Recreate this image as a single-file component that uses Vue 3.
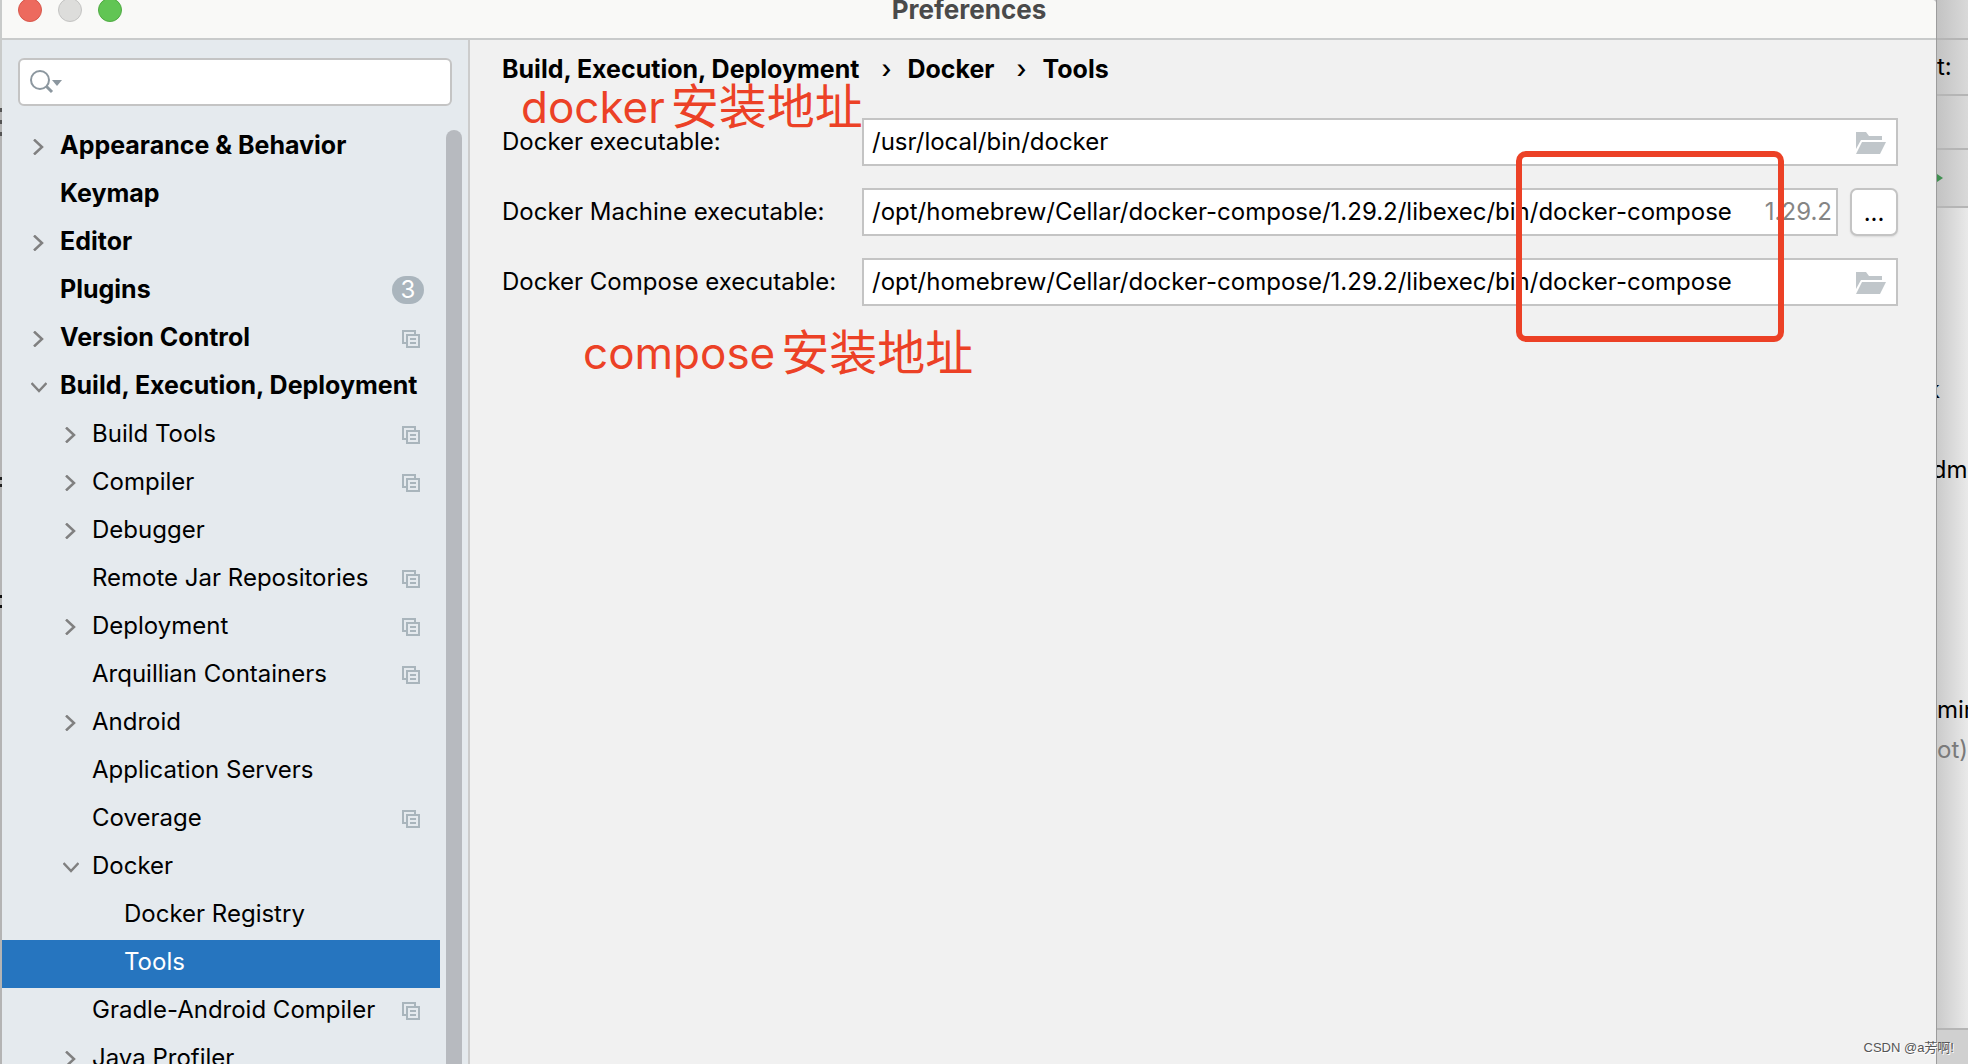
<template>
  <div class="desktop">
    <div class="edge-left"></div>

    <main class="window">
      <header class="titlebar">
        <div class="lights">
          <button class="light close" aria-label="Close"></button>
          <button class="light minimize" aria-label="Minimize"></button>
          <button class="light zoom" aria-label="Zoom"></button>
        </div>
        <h1 class="title">Preferences</h1>
      </header>

      <div class="body">
        <aside class="sidebar">
          <label class="search">
            <svg class="search-icon" viewBox="0 0 34 26" aria-hidden="true">
              <circle cx="10" cy="11" r="9" fill="none" stroke="#8c979f" stroke-width="2" />
              <path d="M16.5 17.5l5.500 5.500" stroke="#8c979f" stroke-width="3" />
              <path d="M22 11h10l-5 6z" fill="#8c979f" />
            </svg>
            <input v-model="query" type="text" aria-label="Search settings" />
          </label>

          <div class="tree-area">
            <ul class="tree">
              <li v-for="item in items" :key="item.name">
                <button
                  class="row"
                  :class="['level-' + item.level, { selected: item.name === selected }]"
                  @click="selected = item.name"
                >
                  <svg class="arrow" viewBox="0 0 16 16" aria-hidden="true">
                    <path v-if="item.arrow === 'right'" d="M3 0.500l8 7.500l-8 7.500" />
                    <path v-if="item.arrow === 'down'" d="M0.500 4l7.500 8l7.500 -8" />
                  </svg>
                  <span class="name">{{ item.name }}</span>
                  <span v-if="item.badge" class="badge">{{ item.badge }}</span>
                  <svg v-if="item.project" class="project" viewBox="0 0 18 18" aria-hidden="true">
                    <path d="M4 13H1V1h12v3" />
                    <path d="M5 5h12v12H5zM8 9h6M8 13h6" />
                  </svg>
                </button>
              </li>
            </ul>
            <div class="scrollbar"></div>
          </div>
        </aside>

        <section class="content">
          <nav class="crumbs">
            <a href="#">Build, Execution, Deployment</a>
            <span>›</span>
            <a href="#">Docker</a>
            <span>›</span>
            <a href="#">Tools</a>
          </nav>

          <form class="form" @submit.prevent>
            <template v-for="field in fields" :key="field.id">
              <label :for="field.id">{{ field.label }}</label>
              <div class="control">
                <div class="field">
                  <input :id="field.id" v-model="field.value" type="text" />
                  <span v-if="field.version" class="version">{{ field.version }}</span>
                  <button v-else type="button" class="browse" aria-label="Browse">
                    <svg viewBox="0 0 30 22" aria-hidden="true">
                      <path d="M0 0h10l3 4h13v4H5L0 17z" />
                      <path d="M6 10h24l-6 12H0z" />
                    </svg>
                  </button>
                </div>
                <button v-if="field.version" type="button" class="more">...</button>
              </div>
            </template>
          </form>

          <p class="note note-docker">docker<span>安装地址</span></p>
          <p class="note note-compose">compose<span>安装地址</span></p>
          <div class="highlight"></div>
        </section>
      </div>
    </main>

    <!-- the editor window showing behind the dialog -->
    <aside class="edge-right">
      <div class="strip strip-title"></div>
      <div class="strip strip-tabs">t:</div>
      <div class="strip strip-nav"></div>
      <div class="strip strip-run">
        <svg viewBox="0 0 6 8" aria-hidden="true"><path d="M0 0l6 4l-6 4z" fill="#3f8f50" /></svg>
      </div>
      <div class="lines">
        <span class="sliver">k</span>
        <span class="centered">dmi</span>
        <span>min</span>
        <span class="muted">oot)</span>
      </div>
      <div class="strip-status"></div>
    </aside>

    <div class="watermark">CSDN @a芳啊!</div>
  </div>
</template>

<script setup>
import { ref } from 'vue'

const query = ref('')
const selected = ref('Tools')

const items = [
  { name: 'Appearance & Behavior', level: 1, arrow: 'right' },
  { name: 'Keymap', level: 1 },
  { name: 'Editor', level: 1, arrow: 'right' },
  { name: 'Plugins', level: 1, badge: 3 },
  { name: 'Version Control', level: 1, arrow: 'right', project: true },
  { name: 'Build, Execution, Deployment', level: 1, arrow: 'down' },
  { name: 'Build Tools', level: 2, arrow: 'right', project: true },
  { name: 'Compiler', level: 2, arrow: 'right', project: true },
  { name: 'Debugger', level: 2, arrow: 'right' },
  { name: 'Remote Jar Repositories', level: 2, project: true },
  { name: 'Deployment', level: 2, arrow: 'right', project: true },
  { name: 'Arquillian Containers', level: 2, project: true },
  { name: 'Android', level: 2, arrow: 'right' },
  { name: 'Application Servers', level: 2 },
  { name: 'Coverage', level: 2, project: true },
  { name: 'Docker', level: 2, arrow: 'down' },
  { name: 'Docker Registry', level: 3 },
  { name: 'Tools', level: 3 },
  { name: 'Gradle-Android Compiler', level: 2, project: true },
  { name: 'Java Profiler', level: 2, arrow: 'right' },
]

const fields = ref([
  { id: 'docker', label: 'Docker executable:', value: '/usr/local/bin/docker' },
  {
    id: 'machine',
    label: 'Docker Machine executable:',
    value: '/opt/homebrew/Cellar/docker-compose/1.29.2/libexec/bin/docker-compose',
    version: '1.29.2',
  },
  {
    id: 'compose',
    label: 'Docker Compose executable:',
    value: '/opt/homebrew/Cellar/docker-compose/1.29.2/libexec/bin/docker-compose',
  },
])
</script>

<style>
body {
  margin: 0;
  overflow: hidden;
}
</style>

<style scoped>
* {
  box-sizing: border-box;
}

button,
input {
  font: inherit;
  color: inherit;
  padding: 0;
  border: 0;
  outline: 0;
  background: none;
}

.desktop {
  position: relative;
  display: flex;
  height: 100vh;
  overflow: hidden;
  background: #c4c4c4;
  font-family: Inter, "Noto Sans CJK SC", sans-serif;
  font-size: 24px;
  line-height: 32px;
  color: #000;
}

.edge-left {
  width: 2px;
  background: linear-gradient(
    #c9cbca 0 108px, #555 108px 112px, #b4b4b4 112px 120px, #555 120px 124px,
    #b4b4b4 124px 132px, #555 132px 136px, #b4b4b4 136px 477px, #222 477px 480px,
    #b4b4b4 480px 484px, #222 484px 487px, #b4b4b4 487px 595px, #111 595px 598px,
    #b4b4b4 598px 605px, #111 605px 608px, #b4b4b4 608px
  );
}

.window {
  flex: 1;
  min-width: 0;
  display: flex;
  flex-direction: column;
  background: #f1f1f1;
  border-top-right-radius: 4px;
  overflow: hidden;
}

.titlebar {
  display: grid;
  grid-template-columns: 1fr auto 1fr;
  grid-template-rows: 20px;
  align-items: center;
  flex: none;
  height: 40px;
  padding: 0 16px;
  background: #f9f9f7;
  border-bottom: 2px solid #c9cbcb;
}

.lights {
  display: flex;
  align-items: center;
  gap: 16px;
  height: 20px;
}

.light {
  flex: none;
  width: 24px;
  height: 24px;
  border-radius: 50%;
}

.close {
  background: #ed6a5e;
  border: 1px solid #d8584c;
}

.minimize {
  background: #dddddb;
  border: 1px solid #c4c4c3;
}

.zoom {
  background: #61c554;
  border: 1px solid #50ab43;
}

.title {
  margin: 0;
  font-size: 26px;
  line-height: 18px;
  font-weight: 700;
  color: #4a4a4a;
}

.body {
  flex: 1;
  min-height: 0;
  display: flex;
}

.sidebar {
  flex: none;
  width: 468px;
  display: flex;
  flex-direction: column;
  padding-top: 18px;
  background: #e5eaee;
  border-right: 2px solid #cccccc;
}

.search {
  flex: none;
  display: flex;
  align-items: center;
  gap: 8px;
  height: 48px;
  margin: 0 16px 18px;
  padding: 0 10px;
  background: #fff;
  border: 2px solid #c4c4c4;
  border-radius: 6px;
}

.search-icon {
  width: 34px;
  height: 26px;
}

.search input {
  flex: 1;
  min-width: 0;
}

.tree-area {
  flex: 1;
  min-height: 0;
  display: flex;
  gap: 6px;
  overflow: hidden;
}

.tree {
  flex: none;
  width: 438px;
  margin: 0;
  padding: 0;
  list-style: none;
}

.row {
  display: flex;
  align-items: center;
  width: 100%;
  height: 48px;
  padding: 0 20px 2px 0;
  text-align: left;
  white-space: nowrap;
}

.row.level-1 {
  padding-left: 29px;
  font-size: 25px;
  font-weight: 700;
}

.row.level-2 {
  padding-left: 61px;
}

.row.level-3 {
  padding-left: 93px;
}

.selected {
  background: #2675bf;
  color: #fff;
}

.arrow {
  flex: none;
  width: 16px;
  height: 16px;
  margin-right: 13px;
  fill: none;
  stroke: #808080;
  stroke-width: 2.500;
}

.name {
  flex: 1;
  min-width: 0;
  padding-bottom: 2px;
}

.level-1 .name {
  padding-bottom: 4px;
}

.badge {
  width: 32px;
  height: 28px;
  margin: 0 -4px 2px 0;
  border-radius: 14px;
  background: #aab5bd;
  color: #fff;
  font-size: 24px;
  line-height: 28px;
  font-weight: 400;
  text-align: center;
}

.project {
  flex: none;
  width: 18px;
  height: 18px;
  fill: none;
  stroke: #a9b5bc;
  stroke-width: 2;
}

.scrollbar {
  width: 16px;
  margin-top: 6px;
  border-radius: 8px 8px 0 0;
  background: #b7babf;
}

.content {
  position: relative;
  flex: 1;
  min-width: 0;
  padding: 13px 38px 0 32px;
}

.crumbs {
  display: flex;
  font-size: 25px;
  font-weight: 700;
}

.crumbs a {
  color: inherit;
  text-decoration: none;
}

.crumbs span {
  width: 48px;
  padding-left: 6px;
  text-align: center;
  font-weight: 500;
}

.form {
  display: grid;
  grid-template-columns: 360px 1fr;
  gap: 22px 0;
  align-items: center;
  margin-top: 33px;
}

.form label {
  white-space: nowrap;
}

.control {
  display: flex;
  gap: 12px;
  min-width: 0;
}

.field {
  flex: 1;
  min-width: 0;
  display: flex;
  align-items: center;
  height: 48px;
  padding-left: 8px;
  background: #fff;
  border: 2px solid #c4c4c4;
}

.field input {
  flex: 1;
  min-width: 0;
  height: 44px;
  padding-bottom: 2px;
}

.version {
  padding-right: 4px;
  color: #858585;
}

.browse {
  display: flex;
  padding-top: 2px;
  margin-right: 10px;
}

.browse svg {
  width: 30px;
  height: 22px;
  fill: #c0c6ca;
}

.more {
  width: 48px;
  height: 48px;
  padding-top: 2px;
  background: #fff;
  border: 2px solid #c4c4c4;
  border-radius: 7px;
  box-shadow: 0 1px 2px rgba(0, 0, 0, 0.1);
}

/* hand-made marks lying over the form */
.note {
  position: absolute;
  display: flex;
  align-items: center;
  gap: 6px;
  margin: 0;
  color: #ec4126;
  font-size: 44px;
  line-height: 60px;
  white-space: nowrap;
}

.note span {
  font-size: 48px;
}

.note-docker {
  top: 37px;
  left: 51px;
}

.note-compose {
  top: 283px;
  left: 113px;
}

.highlight {
  position: absolute;
  top: 111px;
  right: 152px;
  width: 268px;
  height: 191px;
  border: 6px solid #ec4126;
  border-radius: 10px;
}

.edge-right {
  flex: none;
  width: 32px;
  display: flex;
  flex-direction: column;
  overflow: hidden;
  border-left: 1px solid #9c9c9c;
  background: linear-gradient(90deg, #cbcbcb, #e9e9e9);
}

.strip {
  flex: none;
  height: 56px;
  border-bottom: 2px solid #b5b5b5;
  background: linear-gradient(90deg, #c3c3c3, #d9d9d9);
  line-height: 54px;
}

.strip-title {
  height: 40px;
}

.strip-nav {
  height: 54px;
}

.strip-run {
  display: flex;
  align-items: center;
  height: 58px;
}

.strip-run svg {
  width: 6px;
  height: 8px;
}

.lines {
  flex: 1;
  display: grid;
  grid-template-columns: minmax(0, 1fr);
  grid-template-rows: 80px 240px 40px 40px;
  padding-top: 166px;
}

.lines span {
  display: flex;
}

.lines .sliver {
  width: 3px;
  justify-content: flex-end;
  overflow: hidden;
}

.lines .centered {
  justify-content: center;
}

.lines .muted {
  justify-content: flex-end;
  color: #7a7a7a;
}

.strip-status {
  height: 36px;
  border-top: 2px solid #b5b5b5;
  background: #d0d0d0;
}

.watermark {
  position: absolute;
  right: 14px;
  bottom: 6px;
  color: #555;
  font-family: "Liberation Sans", "Noto Sans CJK SC", sans-serif;
  font-size: 13px;
  line-height: 20px;
  text-shadow: 1px 1px 0 #fff;
}
</style>
